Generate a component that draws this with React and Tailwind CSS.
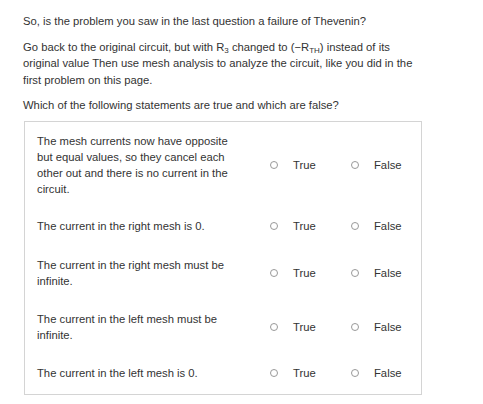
import React from "react";

const rows = [
  { text: "The mesh currents now have opposite but equal values, so they cancel each other out and there is no current in the circuit.", mt: "" },
  { text: "The current in the right mesh is 0.", mt: "mt-[21px]" },
  { text: "The current in the right mesh must be infinite.", mt: "mt-[23px]" },
  { text: "The current in the left mesh must be infinite.", mt: "mt-[22px]" },
  { text: "The current in the left mesh is 0.", mt: "mt-[22px]" },
];

function Radio({ label }) {
  return (
    <div className="flex items-center">
      <span className="w-[8px] h-[8px] rounded-full border border-[#999] bg-white shrink-0" />
      <span className="ml-[15px]">{label}</span>
    </div>
  );
}

export default function App() {
  return (
    <div
      className="w-[483px] h-[404px] bg-white text-[#333] text-[11.25px] leading-[16.5px] pl-[23px] pt-[13px]"
      style={{ fontFamily: '"Liberation Sans", Arial, sans-serif' }}
    >
      <p>So, is the problem you saw in the last question a failure of Thevenin?</p>
      <p className="mt-[9px] w-[395px]">
        Go back to the original circuit, but with R<sub className="text-[8px] leading-none">3</sub> changed to (−R<sub className="text-[8px] leading-none">TH</sub>) instead of its original value Then use mesh analysis to analyze the circuit, like you did in the first problem on this page.
      </p>
      <p className="mt-[9px]">Which of the following statements are true and which are false?</p>
      <div className="mt-[7px] ml-px w-[398px] border border-[#d4d4d4] pl-[12px] pt-[11px] pb-[13px] flex flex-col leading-[16px]">
        {rows.map((r, i) => (
          <div key={i} className={`flex items-center ${r.mt}`}>
            <div className="w-[200px]">{r.text}</div>
            <div className="ml-[33px] w-[81px]">
              <Radio label="True" />
            </div>
            <Radio label="False" />
          </div>
        ))}
      </div>
    </div>
  );
}
